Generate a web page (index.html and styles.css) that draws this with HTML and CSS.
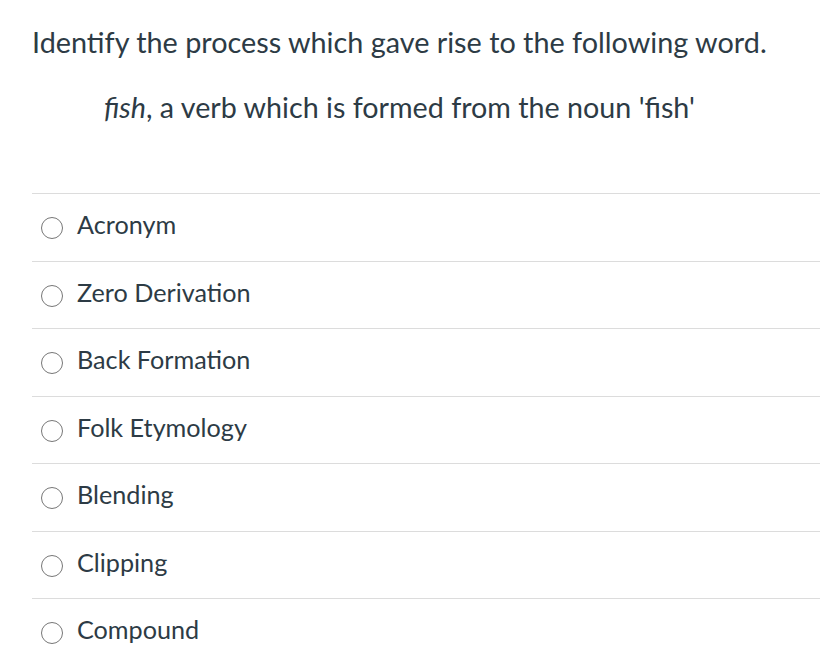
FILE: index.html
```html
<!DOCTYPE html>
<html>
<head>
<meta charset="utf-8">
<link rel="stylesheet" href="styles.css">
</head>
<body>
<div class="quiz">
  <div class="question">
    <p class="prompt">Identify the process which gave rise to the following word.</p>
    <p class="word"><em>fish</em>, a verb which is formed from the noun 'fish'</p>
  </div>
  <div class="answers">
    <label class="answer"><span class="radio"></span><span class="label">Acronym</span></label>
    <label class="answer"><span class="radio"></span><span class="label">Zero Derivation</span></label>
    <label class="answer"><span class="radio"></span><span class="label">Back Formation</span></label>
    <label class="answer"><span class="radio"></span><span class="label">Folk Etymology</span></label>
    <label class="answer"><span class="radio"></span><span class="label">Blending</span></label>
    <label class="answer"><span class="radio"></span><span class="label">Clipping</span></label>
    <label class="answer"><span class="radio"></span><span class="label">Compound</span></label>
  </div>
</div>
</body>
</html>
```
FILE: styles.css
```css
html, body {
  margin: 0;
  padding: 0;
  background: #ffffff;
}
body {
  font-family: Lato, "Liberation Sans", sans-serif;
  color: #2d3b45;
}
.quiz {
  padding-left: 32px;
}
.question {
  padding-top: 25px;
  height: 193px;
  box-sizing: border-box;
}
.prompt {
  margin: 0;
  font-size: 28.8px;
  line-height: 1.2;
}
.word {
  margin: 30px 0 0 72px;
  font-size: 28.7px;
  line-height: 1.2;
}
.word em {
  font-style: italic;
}
.answers {
  display: flex;
  flex-direction: column;
}
.answer {
  display: flex;
  align-items: center;
  border-top: 1px solid #dcdcdc;
  height: 67.5px;
  box-sizing: border-box;
  font-size: 25.2px;
}
.radio {
  width: 22px;
  height: 22px;
  box-sizing: border-box;
  border: 1.6px solid #777777;
  border-radius: 50%;
  margin-left: 9px;
  margin-right: 14px;
  margin-top: 2px;
  flex: none;
}
.label {
  line-height: 1.2;
  padding-bottom: 6px;
}
```
